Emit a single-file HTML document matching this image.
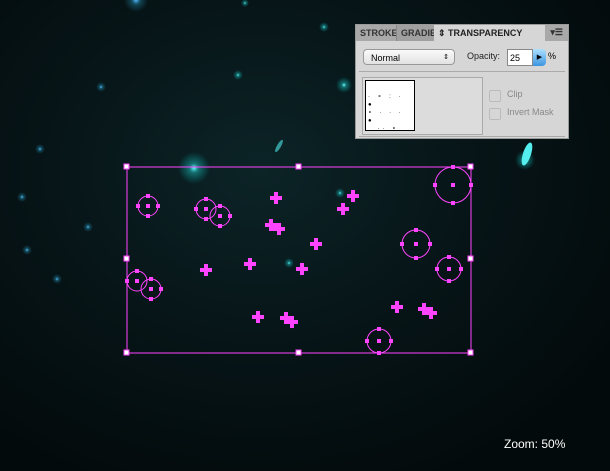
<!DOCTYPE html>
<html><head><style>
body{margin:0;width:610px;height:471px;overflow:hidden;background:#030a0b;font-family:"Liberation Sans",sans-serif}
.bg{position:absolute;left:0;top:0;width:610px;height:471px;background:radial-gradient(ellipse 420px 340px at 260px 170px,#0c2427 0%,#071619 45%,#030a0b 100%)}
svg{position:absolute;left:0;top:0}
.panel{position:absolute;left:355px;top:24px;width:214px;height:115px;background:#d6d6d6;border:1px solid #9a9a9a;box-sizing:border-box}
.tabs{height:16px;background:#a9a9a9;position:relative;font-size:9px;font-weight:bold;color:#333}
.tab{position:absolute;top:0;height:16px;line-height:16px;padding-left:4px;overflow:hidden;white-space:nowrap;border-right:1px solid #888}
.zoom{position:absolute;left:504px;top:437px;color:#fff;font-size:12px}
</style></head><body>
<div class="bg"></div>
<svg width="610" height="471">
<defs><radialGradient id="g"><stop offset="0" stop-color="#6ff" stop-opacity="1"/><stop offset=".3" stop-color="#2bb" stop-opacity=".5"/><stop offset="1" stop-color="#0aa" stop-opacity="0"/></radialGradient>
<radialGradient id="b"><stop offset="0" stop-color="#5bf"/><stop offset=".4" stop-color="#28a" stop-opacity=".4"/><stop offset="1" stop-color="#28a" stop-opacity="0"/></radialGradient></defs>
<circle cx="194" cy="168" r="16" fill="url(#g)"/><circle cx="136" cy="0" r="12" fill="url(#b)"/>
<circle cx="324" cy="27" r="5" fill="url(#g)"/><circle cx="238" cy="75" r="5" fill="url(#g)"/>
<circle cx="245" cy="3" r="4" fill="url(#g)"/><circle cx="101" cy="87" r="5" fill="url(#b)"/>
<circle cx="40" cy="149" r="5" fill="url(#b)"/><circle cx="22" cy="197" r="5" fill="url(#b)"/>
<circle cx="88" cy="227" r="5" fill="url(#b)"/><circle cx="27" cy="250" r="5" fill="url(#b)"/>
<circle cx="57" cy="279" r="5" fill="url(#b)"/><circle cx="340" cy="193" r="5" fill="url(#g)"/>
<circle cx="289" cy="263" r="5" fill="url(#g)"/><circle cx="344" cy="85" r="8" fill="url(#g)"/>
<ellipse cx="279" cy="146" rx="2" ry="7" transform="rotate(30 279 146)" fill="#4cc" opacity=".7"/>
<circle cx="525" cy="160" r="10" fill="url(#g)"/>
<ellipse cx="527" cy="154" rx="4" ry="12" transform="rotate(18 527 154)" fill="#5ee"/>
<g fill="none" stroke="#f4f" stroke-width="1">
<rect x="127" y="167" width="344" height="186"/>
</g>
<g fill="#fff" stroke="#f4f"><rect x="124" y="164" width="5" height="5"/><rect x="296" y="164" width="5" height="5"/><rect x="468" y="164" width="5" height="5"/><rect x="124" y="256" width="5" height="5"/><rect x="468" y="256" width="5" height="5"/><rect x="124" y="350" width="5" height="5"/><rect x="296" y="350" width="5" height="5"/><rect x="468" y="350" width="5" height="5"/></g>
<g fill="none" stroke="#f4f">
<circle cx="148" cy="206" r="10"/>
<circle cx="206" cy="209" r="10"/><circle cx="220" cy="216" r="10"/>
<circle cx="453" cy="185" r="18"/><circle cx="416" cy="244" r="14"/>
<circle cx="449" cy="269" r="12"/><circle cx="137" cy="281" r="10"/>
<circle cx="151" cy="289" r="10"/><circle cx="379" cy="341" r="12"/>
</g>
<g fill="#f4f">
<rect x="146" y="204" width="4" height="4"/><rect x="146" y="194" width="4" height="4"/><rect x="146" y="214" width="4" height="4"/><rect x="136" y="204" width="4" height="4"/><rect x="156" y="204" width="4" height="4"/>
<rect x="204" y="207" width="4" height="4"/><rect x="204" y="197" width="4" height="4"/><rect x="204" y="217" width="4" height="4"/><rect x="194" y="207" width="4" height="4"/>
<rect x="218" y="214" width="4" height="4"/><rect x="218" y="204" width="4" height="4"/><rect x="218" y="224" width="4" height="4"/><rect x="228" y="214" width="4" height="4"/>
<rect x="451" y="183" width="4" height="4"/><rect x="451" y="165" width="4" height="4"/><rect x="451" y="201" width="4" height="4"/><rect x="433" y="183" width="4" height="4"/><rect x="469" y="183" width="4" height="4"/>
<rect x="414" y="242" width="4" height="4"/><rect x="414" y="228" width="4" height="4"/><rect x="414" y="256" width="4" height="4"/><rect x="400" y="242" width="4" height="4"/><rect x="428" y="242" width="4" height="4"/>
<rect x="447" y="267" width="4" height="4"/><rect x="447" y="255" width="4" height="4"/><rect x="447" y="279" width="4" height="4"/><rect x="435" y="267" width="4" height="4"/><rect x="459" y="267" width="4" height="4"/>
<rect x="135" y="279" width="4" height="4"/><rect x="135" y="269" width="4" height="4"/><rect x="125" y="279" width="4" height="4"/>
<rect x="149" y="287" width="4" height="4"/><rect x="149" y="297" width="4" height="4"/><rect x="159" y="287" width="4" height="4"/><rect x="149" y="277" width="4" height="4"/>
<rect x="377" y="339" width="4" height="4"/><rect x="377" y="327" width="4" height="4"/><rect x="377" y="351" width="4" height="4"/><rect x="365" y="339" width="4" height="4"/><rect x="389" y="339" width="4" height="4"/>
</g>
<g fill="none" stroke="#f4f" stroke-width="4">
<path d="M276 192v12M270 198h12"/><path d="M353 190v12M347 196h12"/><path d="M343 203v12M337 209h12"/>
<path d="M271 219v12M265 225h12"/><path d="M279 223v12M273 229h12"/><path d="M316 238v12M310 244h12"/>
<path d="M250 258v12M244 264h12"/><path d="M206 264v12M200 270h12"/><path d="M302 263v12M296 269h12"/>
<path d="M397 301v12M391 307h12"/><path d="M424 303v12M418 309h12"/><path d="M431 307v12M425 313h12"/>
<path d="M258 311v12M252 317h12"/><path d="M286 312v12M280 318h12"/><path d="M292 316v12M286 322h12"/>
</g>
</svg>
<div class="panel">
<div class="tabs">
<div class="tab" style="left:0;width:36px">STROKE</div>
<div class="tab" style="left:41px;width:34px;background:#a0a0a0">GRADIENT</div>
<div class="tab" style="left:78px;width:107px;background:#d6d6d6;color:#222;border:none">⇕ TRANSPARENCY</div>
<div style="position:absolute;right:5px;top:2px;font-size:9px;color:#333">▾☰</div>
</div>
<div style="position:absolute;left:7px;top:24px;width:92px;height:16px;background:linear-gradient(#fafafa,#e2e2e2);border:1px solid #999;border-radius:4px;font-size:9px;line-height:16px;padding-left:7px;box-sizing:border-box">Normal<span style="position:absolute;right:5px;font-size:7px">⇕</span></div>
<div style="position:absolute;left:111px;top:26px;font-size:9px;color:#222">Opacity:</div>
<div style="position:absolute;left:151px;top:24px;width:26px;height:17px;background:#fff;border:1px solid #888;font-size:9px;line-height:16px;padding-left:2px;box-sizing:border-box">25</div>
<div style="position:absolute;left:177px;top:24px;width:13px;height:17px;background:linear-gradient(#aee0ff,#3c95e0);border-radius:0 4px 4px 0;font-size:7px;line-height:17px;text-align:center">▶</div>
<div style="position:absolute;left:192px;top:26px;font-size:9px">%</div>
<div style="position:absolute;left:3px;top:46px;width:206px;border-top:1px solid #aaa"></div>
<div style="position:absolute;left:6px;top:52px;width:119px;height:56px;border:1px solid #aaa;background:#dcdcdc"></div>
<div style="position:absolute;left:9px;top:55px;width:50px;height:51px;background:#fff;border:1px solid #000;box-sizing:border-box;font-size:6px;color:#000;letter-spacing:3px;line-height:8px;padding:12px 2px">· ∘ : · ●<br>∘ · · · ●<br>&nbsp; ·· ∘</div>
<div style="position:absolute;left:133px;top:65px;width:10px;height:10px;border:1px solid #bbb;border-radius:2px"></div>
<div style="position:absolute;left:151px;top:64px;font-size:9px;color:#888">Clip</div>
<div style="position:absolute;left:133px;top:83px;width:10px;height:10px;border:1px solid #bbb;border-radius:2px"></div>
<div style="position:absolute;left:151px;top:82px;font-size:9px;color:#888">Invert Mask</div>
<div style="position:absolute;left:3px;top:111px;width:206px;border-top:1px solid #aaa"></div>
</div>
<div class="zoom">Zoom: 50%</div>
</body></html>
